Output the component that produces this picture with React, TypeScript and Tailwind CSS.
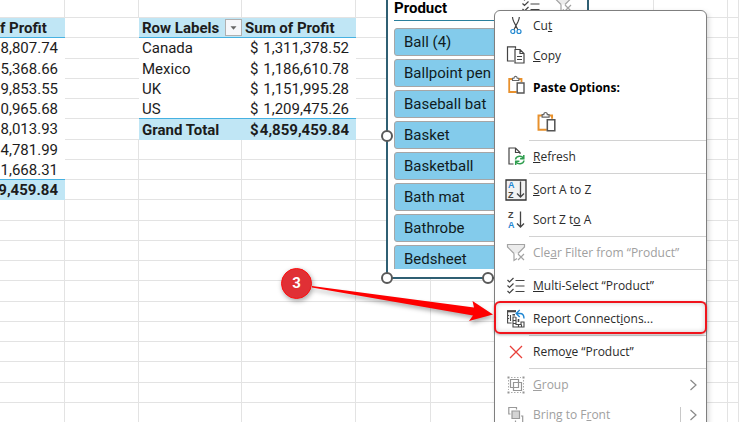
import { type ReactNode } from "react";

type PivotRow = { label: string; profit: string };

const pivotRows: PivotRow[] = [
  { label: "Canada", profit: "1,311,378.52" },
  { label: "Mexico", profit: "1,186,610.78" },
  { label: "UK", profit: "1,151,995.28" },
  { label: "US", profit: "1,209,475.26" },
];

const leftValues = [
  "8,807.74",
  "5,368.66",
  "9,853.55",
  "0,965.68",
  "8,013.93",
  "4,781.99",
  "1,668.31",
];

const products = [
  "Ball (4)",
  "Ballpoint pen",
  "Baseball bat",
  "Basket",
  "Basketball",
  "Bath mat",
  "Bathrobe",
  "Bedsheet",
];

const ROW_COUNT = 21;
const EMPTY_COLS = [4, 5, 6, 7, 8, 9];

const grid = "border-r border-b border-[#e3e3e3]";
const head = "bg-[#c0e6f5] border-b border-[#46b1e1] font-bold";
const total = "bg-[#c0e6f5] font-bold";

function rowHeight(i: number) {
  if (i === 0) return "h-[18px]";
  return i % 4 === 2 ? "h-[21px]" : "h-5";
}

function LeftCell({ row }: { row: number }) {
  if (row === 1) return <th className={`${head} pr-5 text-right whitespace-nowrap`}>f Profit</th>;
  if (row >= 2 && row <= 8) {
    const last = row === 8;
    return (
      <td className={`bg-white pr-[7px] text-right border-b ${last ? "border-[#46b1e1]" : "border-white"}`}>
        {leftValues[row - 2]}
      </td>
    );
  }
  if (row === 9) {
    return (
      <td className={total}>
        <div className="flex justify-end pr-[7px]">9,459.84</div>
      </td>
    );
  }
  return <td className={grid} />;
}

function Money({ value }: { value: string }) {
  return (
    <div className="flex justify-between pr-[7px] pl-2">
      <span>$</span>
      <span>{value}</span>
    </div>
  );
}

function PivotCells({ row }: { row: number }) {
  if (row === 1) {
    return (
      <>
        <th className={`${head} text-left`}>
          <div className="flex items-center justify-between pl-[3px]">
            <span className="whitespace-nowrap">Row Labels</span>
            <button
              aria-label="Filter row labels"
              className="flex h-[17px] w-[17px] items-center justify-center border border-[#b0b0b0] bg-[#f6f7fa]"
            >
              <svg width="7" height="4" viewBox="0 0 7 4" className="shrink-0">
                <path d="M0.5 0.3h6L3.5 3.7z" fill="#666" />
              </svg>
            </button>
          </div>
        </th>
        <th className={`${head} pl-[3px] text-left whitespace-nowrap`}>Sum of Profit</th>
      </>
    );
  }
  if (row >= 2 && row <= 5) {
    const item = pivotRows[row - 2];
    const line = row === 5 ? "border-[#46b1e1]" : "border-white";
    return (
      <>
        <td className={`border-b bg-white pl-[3px] ${line}`}>{item.label}</td>
        <td className={`border-b bg-white ${line}`}>
          <Money value={item.profit} />
        </td>
      </>
    );
  }
  if (row === 6) {
    return (
      <>
        <td className={`${total} pl-[3px]`}>Grand Total</td>
        <td className={total}>
          <Money value="4,859,459.84" />
        </td>
      </>
    );
  }
  return (
    <>
      <td className={grid} />
      <td className={grid} />
    </>
  );
}

function Sheet() {
  return (
    <table className="w-full table-fixed border-separate border-spacing-0 text-[15px] leading-[18px] text-[#1c1c1c]">
      <colgroup>
        <col className="w-[65px]" />
        <col className="w-[74px]" />
        <col className="w-[103px]" />
        <col className="w-[114px]" />
        <col className="w-[75px]" />
        <col className="w-[74px]" />
        <col className="w-[74px]" />
        <col className="w-[75px]" />
        <col className="w-[74px]" />
        <col />
      </colgroup>
      <tbody>
        {Array.from({ length: ROW_COUNT }, (_, row) => (
          <tr key={row} className={rowHeight(row)}>
            <LeftCell row={row} />
            <td className={row >= 1 && row <= 6 ? "border-b border-[#e3e3e3]" : grid} />
            <PivotCells row={row} />
            {EMPTY_COLS.map((c) => (
              <td key={c} className={grid} />
            ))}
          </tr>
        ))}
      </tbody>
    </table>
  );
}

function ChecklistIcon() {
  return (
    <svg width="20" height="20" viewBox="0 0 20 20" fill="none" stroke="#444" strokeWidth="1.2">
      <path d="M1.5 4l2 2 4-4M1.5 9.5l2 2 4-4M1.5 15l2 2 4-4M9.500 4.500h9M9.500 10h9M9.500 15.500h9" />
    </svg>
  );
}

function FunnelIcon() {
  return (
    <svg width="20" height="20" viewBox="0 0 20 20" fill="none" stroke="#a3a3a3" strokeWidth="1.2">
      <path d="M8 10.500L1.500 4V1.500h17V4l-6.500 6.500" fill="#ececec" />
      <path d="M8 10.500v7l3-2" />
      <path d="M12 11l6 6M18 11l-6 6" />
    </svg>
  );
}

function CutIcon() {
  return (
    <svg width="20" height="20" viewBox="0 0 20 20" fill="none" strokeWidth="1.2">
      <path d="M6.500 1c0 2 .5 3 1.200 4.500L12 14M13.300 1c0 2-.5 3-1.200 4.500L7.800 14" stroke="#444" />
      <circle cx="6.800" cy="15.500" r="2" stroke="#2288d0" />
      <circle cx="13" cy="15.500" r="2" stroke="#2288d0" />
    </svg>
  );
}

function CopyIcon() {
  return (
    <svg width="20" height="20" viewBox="0 0 20 20" fill="none" stroke="#444" strokeWidth="1.2">
      <path d="M8 15H1.500V0.800H9.500v2" />
      <path d="M9 3.500h5l4 4v9.500H9zM14 3.500v4h4M11 10.500h5M11 13.500h5" fill="#fff" />
    </svg>
  );
}

function PasteIcon({ large = false }: { large?: boolean }) {
  const size = large ? 22 : 20;
  return (
    <svg width={size} height={size} viewBox="0 0 20 20" fill="none" strokeWidth="1.4">
      <path d="M6.500 4H3.200v13h7.500M13 4h2.500v3" stroke="#e8912d" strokeWidth="1.8" />
      <path d="M6.500 5.500V3.300h1.500c0-2.600 3.200-2.600 3.200 0h1.600v2.200z" fill="#fff" stroke="#666" strokeWidth="1.1" />
      <path d="M11.200 8H18v10h-6.800z" fill="#fff" stroke="#555" />
    </svg>
  );
}

function RefreshIcon() {
  return (
    <svg width="20" height="20" viewBox="0 0 20 20" fill="none" strokeWidth="1.2">
      <path d="M7.500 17H3V1h6.500L14 5.500v1.500M9.500 1v4.500H14" stroke="#444" />
      <g stroke="#2f9e4f" strokeWidth="1.5">
        <path d="M9.500 12.500c.6-4 6.500-4.500 8-1M17.800 8v3.700h-3.700M18 13.500c-.6 4-6.500 4.500-8 1M9.700 18v-3.700h3.700" />
      </g>
    </svg>
  );
}

function SortIcon({ from, to, framed = false }: { from: string; to: string; framed?: boolean }) {
  const colour = (letter: string) => (letter === "A" ? "#1f86d2" : "#444");
  return (
    <svg
      width="22"
      height="22"
      viewBox="0 0 22 22"
      fill="none"
      fontFamily="Liberation Sans, sans-serif"
      fontWeight="bold"
      fontSize="9"
    >
      {framed && <path d="M1 1h20v20H1z" fill="#f2f2f2" stroke="#333" strokeWidth="1.3" />}
      <text x="3" y="8.500" fill={colour(from)}>{from}</text>
      <text x="3" y="19" fill={colour(to)}>{to}</text>
      <path d="M15.500 2.500v15.500M12 14.500l3.500 3.500 3.500-3.500" stroke="#444" strokeWidth="1.3" />
    </svg>
  );
}

function ReportIcon() {
  return (
    <svg width="20" height="20" viewBox="0 0 20 20" fill="none" stroke="#484848" strokeWidth="1.1">
      <path d="M1 2.200h9" strokeWidth="2.2" />
      <path d="M1.600 2v12h4M4.500 6v6M1.600 6.500h1.500M1.600 9.500h1.500" />
      <path d="M6.500 5.800h2.500" strokeWidth="1.6" />
      <path d="M9.500 8H7v10h11v-5h-3v2.500h-5V8M7 11.500h3M7 14.500h3M12.500 15.500V18M15.500 15.500V18" />
      <path d="M12.500 10v3" strokeWidth="1.6" />
      <path d="M10.500 4.500H14c2.800 0 4 1.800 4 5M13.700 1L10.200 4.500l3.500 3.500" stroke="#1f86d2" strokeWidth="1.4" />
    </svg>
  );
}

function RemoveIcon() {
  return (
    <svg width="20" height="20" viewBox="0 0 20 20" fill="none" stroke="#e8403a" strokeWidth="1.3">
      <path d="M4 4l12 12M16 4L4 16" />
    </svg>
  );
}

function GroupIcon() {
  return (
    <svg width="20" height="20" viewBox="0 0 20 20" fill="none" stroke="#959595" strokeWidth="1.2">
      <path d="M4.500 4.500h8v8h-8z" />
      <path d="M7.500 7.500h8v8h-8z" />
      <path d="M5 2.500h10M5 17.500h10M2.500 5v10M17.500 5v10" strokeWidth="0.8" strokeDasharray="1.5 1.500" />
      <path d="M1.500 1.500h2v2h-2zM16.500 1.500h2v2h-2zM1.500 16.500h2v2h-2zM16.500 16.500h2v2h-2z" fill="#959595" stroke="none" />
    </svg>
  );
}

function BringIcon() {
  return (
    <svg width="20" height="20" viewBox="0 0 20 20" fill="none" stroke="#999" strokeWidth="1.2">
      <path d="M4.500 9H2.800V2.500h7.700v2M9.500 15.500v2h7.200V11H15" />
      <path d="M6 6h7.500v7.500H6z" fill="#d4d4d4" />
    </svg>
  );
}

function Slicer() {
  const handle = "absolute h-3 w-3 rounded-full border-2 border-[#595959] bg-white";
  return (
    <section className="absolute -top-2 left-[386px] h-[287px] w-[203px] border-2 border-[#2f5f73] bg-white">
      <div className="flex h-full flex-col overflow-hidden px-[6px] pb-2">
        <header className="flex h-[27px] shrink-0 items-start justify-between border-b border-[#2a7f9c] pr-2">
          <h2 className="mt-1 pt-px text-[15px] leading-[18px] font-bold text-black">Product</h2>
          <div className="flex gap-3">
            <button aria-label="Multi-select">
              <ChecklistIcon />
            </button>
            <button aria-label="Clear filter">
              <FunnelIcon />
            </button>
          </div>
        </header>
        <div className="flex min-h-0 flex-col gap-[3px] overflow-hidden pt-[7px]">
          {products.map((name) => (
            <button
              key={name}
              className="h-7 shrink-0 rounded-[3px] border border-[#a6a6a6] bg-[#83cbeb] pl-[9px] text-left text-[15px] leading-[18px] text-[#101c22]"
            >
              {name}
            </button>
          ))}
        </div>
      </div>
      <span className={`${handle} top-[136px] -left-[7px]`} />
      <span className={`${handle} -bottom-[7px] -left-[7px]`} />
      <span className={`${handle} -bottom-[7px] left-[94px]`} />
    </section>
  );
}

function Divider() {
  return <div className="my-px ml-[34px] h-px bg-[#d2d2d2]" />;
}

type ItemProps = {
  icon: ReactNode;
  children: ReactNode;
  disabled?: boolean;
  submenu?: "plain" | "split";
  marked?: boolean;
};

function MenuItem({ icon, children, disabled, submenu, marked }: ItemProps) {
  return (
    <button
      role="menuitem"
      disabled={disabled}
      className={`relative flex h-[30px] w-full items-center text-left ${
        disabled ? "text-[#a0a0a0]" : "text-[#2b2b2b]"
      }`}
    >
      {marked && (
        <span className="absolute -inset-x-px -top-[3px] bottom-0 rounded-md border-2 border-[#f0141c] shadow-[inset_0_0_5px_rgba(0,0,0,0.2),0_1px_3px_rgba(0,0,0,0.3)]" />
      )}
      <span className="flex w-[38px] shrink-0 justify-center pl-1">{icon}</span>
      <span className="flex-1 whitespace-nowrap">{children}</span>
      {submenu && (
        <span className={`mr-2 flex h-4 items-center pl-2 ${submenu === "split" ? "border-l border-[#c8c8c8]" : ""}`}>
          <svg width="9" height="12" viewBox="0 0 9 12" fill="none" stroke="#888" strokeWidth="1.2">
            <path d="M1.500 1L7 6l-5.500 5" />
          </svg>
        </span>
      )}
    </button>
  );
}

function ContextMenu() {
  return (
    <div
      role="menu"
      className="absolute top-[10px] left-[494px] w-[213px] rounded-md border border-[#7f7f7f] bg-white font-['Open_Sans',sans-serif] text-xs leading-4 shadow-[2px_2px_5px_rgba(0,0,0,0.15)]"
    >
      <MenuItem icon={<CutIcon />}>Cu<u>t</u></MenuItem>
      <MenuItem icon={<CopyIcon />}><u>C</u>opy</MenuItem>
      <div className="flex h-[34px] items-center">
        <span className="flex w-[38px] shrink-0 justify-center self-start pt-1 pl-1">
          <PasteIcon />
        </span>
        <span className="font-bold text-black">Paste Options:</span>
      </div>
      <div className="flex h-[34px] items-center pl-10">
        <button role="menuitem" aria-label="Paste">
          <PasteIcon large />
        </button>
      </div>
      <Divider />
      <MenuItem icon={<RefreshIcon />}><u>R</u>efresh</MenuItem>
      <Divider />
      <MenuItem icon={<SortIcon from="A" to="Z" framed />}><u>S</u>ort A to Z</MenuItem>
      <MenuItem icon={<SortIcon from="Z" to="A" />}>Sort Z t<u>o</u> A</MenuItem>
      <Divider />
      <MenuItem icon={<FunnelIcon />} disabled>Cle<u>a</u>r Filter from “Product”</MenuItem>
      <Divider />
      <MenuItem icon={<ChecklistIcon />}><u>M</u>ulti-Select “Product”</MenuItem>
      <Divider />
      <MenuItem icon={<ReportIcon />} marked>Report Connect<u>i</u>ons...</MenuItem>
      <Divider />
      <MenuItem icon={<RemoveIcon />}>Remo<u>v</u>e “Product”</MenuItem>
      <Divider />
      <MenuItem icon={<GroupIcon />} disabled submenu="plain"><u>G</u>roup</MenuItem>
      <MenuItem icon={<BringIcon />} disabled submenu="split">Bring to F<u>r</u>ont</MenuItem>
    </div>
  );
}

function Callout() {
  return (
    <div className="pointer-events-none absolute top-[268px] left-[281px] flex">
      <span className="flex h-[31px] w-[31px] items-center justify-center rounded-full border border-[#ff1010] bg-[#e03035] text-[15px] font-bold text-white shadow-[1px_2px_5px_rgba(0,0,0,0.35)]">
        3
      </span>
      <svg
        width="184"
        height="60"
        viewBox="0 0 184 60"
        className="drop-shadow-[1px_3px_2px_rgba(0,0,0,0.3)]"
      >
        <path d="M0 18L162 39.500 160.500 33 181 46.500 157 53 161 47.500 0 19.500z" fill="#fe0000" />
      </svg>
    </div>
  );
}

export default function App() {
  return (
    <main className="relative h-screen overflow-hidden bg-white font-[Roboto,sans-serif]">
      <Sheet />
      <Slicer />
      <ContextMenu />
      <Callout />
    </main>
  );
}
